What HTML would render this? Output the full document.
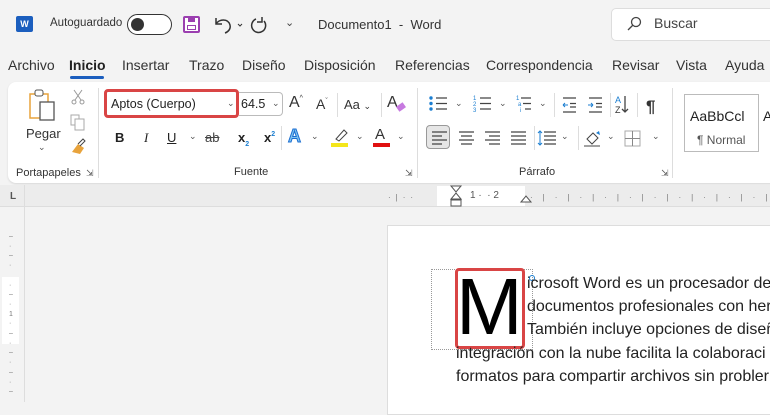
<!DOCTYPE html>
<html><head><meta charset="utf-8">
<style>
*{margin:0;padding:0;box-sizing:border-box}
body{width:770px;height:402px;overflow:hidden;background:#f3f3f3;font-family:"Liberation Sans",sans-serif;color:#222;position:relative}
.a{position:absolute;white-space:nowrap}
.t{font-size:13px;color:#333}
.tab{font-size:14px;color:#333;top:57px}
.chev{font-size:9px;color:#555}
.sep{position:absolute;width:1px;background:#ddd}
.s{position:relative;font-size:7px}
.p{font-size:16px;color:#222;position:absolute;white-space:nowrap}
</style></head><body>
<!-- title bar -->
<div class="a" style="left:16px;top:16px;width:17px;height:16px;background:#1b5ebe;border-radius:2px;color:#fff;font-size:9px;font-weight:bold;text-align:center;line-height:16px">W</div>
<div class="a t" style="left:50px;top:17px;font-size:11.5px">Autoguardado</div>
<div class="a" style="left:127px;top:14px;width:45px;height:21px;border:1.5px solid #333;border-radius:11px;background:#fff"><div style="position:absolute;left:3px;top:3px;width:13px;height:13px;border-radius:50%;background:#333"></div></div>
<div class="a" style="left:183px;top:16px;width:17px;height:17px;border:2.5px solid #9b3fb0;border-radius:2px;background:#fff"><div style="position:absolute;left:3px;top:0;width:7px;height:4px;background:#9b3fb0"></div><div style="position:absolute;left:2px;bottom:1px;width:9px;height:5px;border:1.5px solid #9b3fb0"></div></div>
<svg class="a" style="left:212px;top:14px" width="60" height="22"><path d="M4 4v6h6M4 10c3-5 12-6 14 1c1 4-2 7-5 8" stroke="#333" stroke-width="1.5" fill="none"/><path d="M26 10l2 2 2-2" stroke="#333" fill="none"/><path d="M44 5a7 7 0 1 0 8 2M50 3v5h-5" stroke="#333" stroke-width="1.5" fill="none"/></svg>
<div class="a" style="left:285px;top:16px;font-size:11px;color:#444">&#8964;</div>
<div class="a t" style="left:318px;top:17px">Documento1 &nbsp;- &nbsp;Word</div>
<div class="a" style="left:611px;top:8px;width:170px;height:33px;background:#fff;border:1px solid #ddd;border-radius:5px"></div>
<svg class="a" style="left:626px;top:16px" width="16" height="16"><circle cx="10" cy="6" r="4.5" stroke="#444" stroke-width="1.3" fill="none"/><path d="M7 9l-5 5" stroke="#444" stroke-width="1.3"/></svg>
<div class="a" style="left:654px;top:15px;font-size:14px;color:#444">Buscar</div>
<!-- tabs -->
<div class="a tab" style="left:8px">Archivo</div>
<div class="a tab" style="left:69px;color:#222;font-weight:bold">Inicio</div>
<div class="a" style="left:70px;top:76px;width:34px;height:3px;background:#1b5ebe;border-radius:2px"></div>
<div class="a tab" style="left:122px">Insertar</div>
<div class="a tab" style="left:189px">Trazo</div>
<div class="a tab" style="left:242px">Diseño</div>
<div class="a tab" style="left:304px">Disposición</div>
<div class="a tab" style="left:395px">Referencias</div>
<div class="a tab" style="left:486px">Correspondencia</div>
<div class="a tab" style="left:612px">Revisar</div>
<div class="a tab" style="left:676px">Vista</div>
<div class="a tab" style="left:725px">Ayuda</div>
<!-- ribbon -->
<div class="a" style="left:8px;top:82px;width:780px;height:101px;background:#fff;border-radius:8px;box-shadow:0 1px 2px rgba(0,0,0,.12)"></div>
<svg class="a" style="left:28px;top:88px" width="34" height="36"><rect x="2" y="6" width="18" height="24" fill="#fff" stroke="#e8a33c" stroke-width="1.5"/><rect x="7" y="2" width="8" height="6" rx="2" fill="#fff" stroke="#555"/><rect x="12" y="14" width="14" height="18" fill="#fff" stroke="#555" stroke-width="1.3"/></svg>
<div class="a t" style="left:26px;top:126px">Pegar</div>
<div class="a chev" style="left:38px;top:142px">&#8964;</div>
<svg class="a" style="left:70px;top:88px" width="16" height="70"><path d="M4 2l7 10M12 2l-7 10" stroke="#999" fill="none"/><circle cx="4" cy="14" r="2" stroke="#999" fill="none"/><circle cx="12" cy="14" r="2" stroke="#999" fill="none"/><rect x="1" y="27" width="8" height="10" fill="none" stroke="#aaa"/><rect x="5" y="31" width="9" height="11" fill="#fff" stroke="#aaa"/><path d="M2 64l6-8 6 4-4 6z" fill="#e8a33c"/><path d="M8 56l5-5 2 2-5 5" stroke="#444" fill="none"/></svg>
<div class="a" style="left:16px;top:167px;font-size:11px;color:#333">Portapapeles</div>
<div class="a" style="left:86px;top:168px;font-size:9px;color:#555">&#8690;</div>
<div class="sep" style="left:98px;top:88px;height:90px"></div>
<!-- font -->
<div class="a" style="left:104px;top:89px;width:135px;height:29px;border:3px solid #d94545;border-radius:4px;background:#fff"></div>
<div class="a" style="left:111px;top:97px;font-size:12.5px;color:#222">Aptos (Cuerpo)</div>
<div class="a chev" style="left:227px;top:98px">&#8964;</div>
<div class="a" style="left:239px;top:92px;width:44px;height:24px;border:1px solid #bbb;border-left:none;border-radius:0 4px 4px 0"></div>
<div class="a" style="left:241px;top:97px;font-size:12.5px">64.5</div>
<div class="a chev" style="left:272px;top:98px">&#8964;</div>
<div class="a" style="left:289px;top:94px;font-size:16px;color:#333">A<span class="s" style="top:-7px">^</span></div>
<div class="a" style="left:316px;top:96px;font-size:14px;color:#333">A<span class="s" style="top:-6px">&#711;</span></div>
<div class="sep" style="left:337px;top:93px;height:24px"></div>
<div class="a" style="left:344px;top:97px;font-size:13px;color:#333">Aa <span style="font-size:9px">&#8964;</span></div>
<div class="sep" style="left:381px;top:93px;height:24px"></div>
<div class="a" style="left:387px;top:94px;font-size:16px;color:#333">A</div>
<div class="a" style="left:397px;top:104px;width:8px;height:6px;background:#c77ae0;transform:rotate(-35deg)"></div>
<div class="a" style="left:115px;top:130px;font-size:13px;font-weight:bold">B</div>
<div class="a" style="left:144px;top:130px;font-size:13px;font-style:italic;font-family:'Liberation Serif',serif">I</div>
<div class="a" style="left:167px;top:130px;font-size:13px;text-decoration:underline">U</div>
<div class="a chev" style="left:189px;top:131px">&#8964;</div>
<div class="a" style="left:205px;top:130px;font-size:13px;text-decoration:line-through;color:#444">ab</div>
<div class="a" style="left:238px;top:130px;font-size:13px;font-weight:bold">x<span class="s" style="top:4px;color:#1b7ed1">2</span></div>
<div class="a" style="left:264px;top:130px;font-size:13px;font-weight:bold">x<span class="s" style="top:-6px;color:#1b7ed1">2</span></div>
<div class="sep" style="left:281px;top:126px;height:24px"></div>
<div class="a" style="left:288px;top:126px;font-size:18px;font-weight:bold;color:#7ec3f0;-webkit-text-stroke:1px #1b6ed1">A</div>
<div class="a chev" style="left:311px;top:131px">&#8964;</div>
<svg class="a" style="left:330px;top:127px" width="20" height="20"><path d="M6 12l8-9 3 3-8 8z" stroke="#444" fill="none"/></svg>
<div class="a" style="left:331px;top:143px;width:17px;height:4px;background:#f4e61a"></div>
<div class="a chev" style="left:356px;top:131px">&#8964;</div>
<div class="a" style="left:375px;top:126px;font-size:15px;color:#333">A</div>
<div class="a" style="left:373px;top:143px;width:17px;height:4px;background:#e01010"></div>
<div class="a chev" style="left:397px;top:131px">&#8964;</div>
<div class="a" style="left:234px;top:166px;font-size:11px;color:#333">Fuente</div>
<div class="a" style="left:405px;top:168px;font-size:9px;color:#555">&#8690;</div>
<div class="sep" style="left:417px;top:88px;height:90px"></div>
<!-- paragraph row 1 -->
<svg class="a" style="left:428px;top:94px" width="230" height="22">
<g fill="#1b7ed1"><circle cx="3" cy="4" r="1.7"/><circle cx="3" cy="9.5" r="1.7"/><circle cx="3" cy="15" r="1.7"/></g>
<g stroke="#444" stroke-width="1.3" fill="none">
<path d="M8 4h11M8 9.5h11M8 15h11"/>
<path d="M52 4h11M52 9.5h11M52 15h11"/>
<path d="M93 4h10M95 9.5h8M97 15h6"/>
<path d="M135 4h13M142 9.5h6M142 13h6M135 18h13"/>
<path d="M161 4h13M168 9.5h6M168 13h6M161 18h13"/>
<path d="M197 2v16M194 15l3 3 3-3"/>
</g>
<path d="M140 11h-5M135 11l2-2M135 11l2 2" stroke="#1b7ed1" fill="none"/>
<path d="M160 11h5M165 11l-2-2M165 11l-2 2" stroke="#1b7ed1" fill="none"/>
<g font-family="Liberation Sans" font-size="6" fill="#1b7ed1"><text x="45" y="6">1</text><text x="45" y="12">2</text><text x="45" y="18">3</text><text x="88" y="6">1</text><text x="90" y="12">a</text><text x="92" y="18">i</text></g>
<text x="187" y="9" font-size="9" fill="#1b7ed1" font-family="Liberation Sans">A</text><text x="187" y="19" font-size="9" fill="#333" font-family="Liberation Sans">Z</text>
<text x="218" y="18" font-size="17" fill="#333" font-family="Liberation Sans" font-weight="bold">¶</text>
</svg>
<div class="a chev" style="left:455px;top:98px">&#8964;</div>
<div class="a chev" style="left:499px;top:98px">&#8964;</div>
<div class="a chev" style="left:539px;top:98px">&#8964;</div>
<div class="sep" style="left:554px;top:93px;height:24px"></div>
<div class="sep" style="left:610px;top:93px;height:24px"></div>
<div class="sep" style="left:637px;top:93px;height:24px"></div>
<!-- paragraph row 2 -->
<div class="a" style="left:426px;top:125px;width:24px;height:24px;background:#e6e6e6;border:1px solid #999;border-radius:4px"></div>
<svg class="a" style="left:430px;top:129px" width="230" height="20">
<g stroke="#444" stroke-width="1.3"><path d="M2 3h15M2 7h10M2 11h15M2 15h10"/><path d="M29 3h15M31 7h11M29 11h15M31 15h11"/><path d="M55 3h15M59 7h11M55 11h15M59 15h11"/><path d="M81 3h15M81 7h15M81 11h15M81 15h15"/><path d="M114 3h12M114 7h12M114 11h12M114 15h12"/></g>
<path d="M110 2v14M108 4l2-2 2 2M108 14l2 2 2-2" stroke="#1b7ed1" fill="none"/>
<path d="M157 10l6-6 5 5-6 6z" fill="none" stroke="#444"/><path d="M166 4l3-2 1 4" fill="#1b7ed1"/><path d="M154 17h16" stroke="#444"/>
<rect x="195" y="2" width="15" height="15" fill="none" stroke="#aaa"/><path d="M202.5 2v15M195 9.5h15" stroke="#888"/>
</svg>
<div class="sep" style="left:534px;top:126px;height:24px"></div>
<div class="a chev" style="left:561px;top:131px">&#8964;</div>
<div class="sep" style="left:578px;top:126px;height:24px"></div>
<div class="a chev" style="left:607px;top:131px">&#8964;</div>
<div class="a chev" style="left:652px;top:131px">&#8964;</div>
<div class="a" style="left:519px;top:166px;font-size:11px;color:#333">Párrafo</div>
<div class="a" style="left:661px;top:168px;font-size:9px;color:#555">&#8690;</div>
<div class="sep" style="left:672px;top:88px;height:90px"></div>
<!-- styles -->
<div class="a" style="left:684px;top:94px;width:75px;height:58px;border:1.5px solid #bbb;background:#fff"></div>
<div class="a" style="left:690px;top:108px;font-size:14px;color:#222">AaBbCcl</div>
<div class="a" style="left:697px;top:133px;font-size:12px;color:#555">¶ Normal</div>
<div class="a" style="left:763px;top:108px;font-size:14px">A</div>
<!-- ruler -->
<div class="a" style="left:0;top:185px;width:770px;height:22px;background:#ececec;border-bottom:1px solid #ddd"></div>
<div class="a" style="left:437px;top:186px;width:88px;height:20px;background:#fff"></div>
<div class="a" style="left:388px;top:193px;font-size:8px;color:#777;letter-spacing:5px">·|··</div>
<div class="a" style="left:470px;top:190px;font-size:10px;color:#555">1 · &nbsp;· 2</div>
<div class="a" style="left:530px;top:193px;font-size:8px;color:#777;letter-spacing:10px">·|·|·|·|·|·|·|·|·|·|</div>
<svg class="a" style="left:448px;top:185px" width="90" height="24"><path d="M3 1h10l-5 6zM3 14h10l-5-6z" fill="#fff" stroke="#555"/><rect x="3" y="15" width="10" height="6" fill="#fff" stroke="#555"/><path d="M73 17l5-6 5 6z" fill="#fff" stroke="#555"/></svg>
<div class="a" style="left:10px;top:191px;font-size:10px;color:#555;font-weight:bold">L</div>
<div class="a" style="left:24px;top:185px;width:1px;height:217px;background:#ddd"></div>
<!-- vertical ruler -->
<div class="a" style="left:2px;top:277px;width:17px;height:67px;background:#fff"></div>
<div class="a" style="left:9px;top:232px;font-size:7px;color:#777;line-height:9.7px;white-space:pre">–
·
–
·

·
–
·
1
·
–
·
–
·
–
·
–</div>
<!-- page -->
<div class="a" style="left:387px;top:225px;width:400px;height:190px;background:#fff;border:1px solid #ddd"></div>
<div class="a" style="left:431px;top:269px;width:102px;height:81px;border:1px dotted #999"></div>
<div class="a" style="left:455px;top:268px;width:70px;height:81px;border:3.5px solid #d94545;border-radius:4px"></div>
<div class="a" style="left:456px;top:262px;font-size:80px;line-height:90px;color:#000">M</div>
<div class="a" style="left:529px;top:275px;width:6px;height:6px;border:1px solid #1b7ed1;border-radius:50%"></div>
<div class="p" style="left:527px;top:275px">icrosoft Word es un procesador de</div>
<div class="p" style="left:527px;top:298px">documentos profesionales con her</div>
<div class="p" style="left:527px;top:321px">También incluye opciones de diseñ</div>
<div class="p" style="left:456px;top:345px">integración con la nube facilita la colaboraci</div>
<div class="p" style="left:456px;top:368px">formatos para compartir archivos sin probler</div>
</body></html>
